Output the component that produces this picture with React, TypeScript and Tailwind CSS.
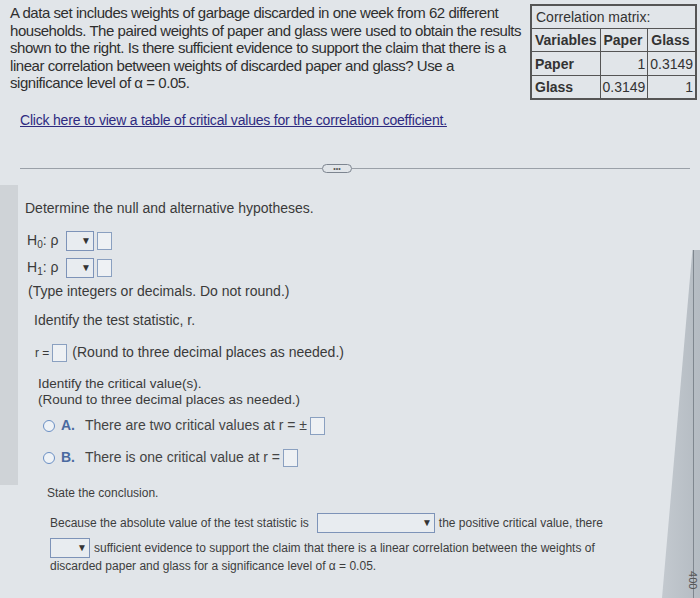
import React from 'react';

const Drop: React.FC<{ w: string }> = ({ w }) => (
  <span className={`inline-flex items-center justify-end border border-[#7d93b8] bg-[#e8ecf0] h-[20px] ${w} align-middle`}>
    <span className="text-[10px] leading-none text-[#333] pr-[2px]">▼</span>
  </span>
);

const Box: React.FC<{ cls?: string }> = ({ cls }) => (
  <span className={`inline-block border border-[#8aa0c0] bg-[#eef1f4] align-middle ${cls ?? 'w-[15px] h-[18px]'}`} />
);

const Radio: React.FC<{ letter: string; text: string }> = ({ letter, text }) => (
  <div className="flex items-center text-[14px] text-[#444]">
    <span className="w-[12px] h-[12px] rounded-full border-[1.5px] border-[#6a8fc4] bg-[#eef2f6] mr-[6px]" />
    <span className="font-bold text-[#4a6aa0] w-[24px]">{letter}</span>
    <span>{text}</span>
    <Box cls="w-[15px] h-[18px] ml-[3px] bg-[#dde6f0]" />
  </div>
);

const App: React.FC = () => {
  return (
    <div
      className="relative w-[700px] h-[598px] overflow-hidden bg-[#e1e5e9] text-[#333]"
      style={{ fontFamily: '"Liberation Sans", Arial, sans-serif' }}
    >
      {/* left bezel */}
      <div className="absolute left-0 top-[185px] h-[300px] w-[18px] bg-[#cfd3d7]" />

      {/* top: question + correlation matrix */}
      <div className="relative flex pl-[10px] pt-[4px]">
        <p className="w-[520px] text-[15px] leading-[17.5px] text-[#2f2f2f] tracking-[-0.45px] whitespace-nowrap">
          A data set includes weights of garbage discarded in one week from 62 different
          <br />
          households. The paired weights of paper and glass were used to obtain the results
          <br />
          shown to the right. Is there sufficient evidence to support the claim that there is a
          <br />
          linear correlation between weights of discarded paper and glass? Use a
          <br />
          significance level of α = 0.05.
        </p>
        <table className="border-collapse border-2 border-[#555] text-[14px] leading-[20px] text-[#333] h-[96px]">
          <tbody>
            <tr>
              <td colSpan={3} className="border border-[#555] px-[4px]">Correlation matrix:</td>
            </tr>
            <tr className="font-bold">
              <td className="border border-[#555] px-[3px]">Variables</td>
              <td className="border border-[#555] px-[3px]">Paper</td>
              <td className="border border-[#555] px-[3px]">Glass</td>
            </tr>
            <tr>
              <td className="border border-[#555] px-[3px] font-bold">Paper</td>
              <td className="border border-[#555] px-[2px] text-right">1</td>
              <td className="border border-[#555] px-[2px] text-right">0.3149</td>
            </tr>
            <tr>
              <td className="border border-[#555] px-[3px] font-bold">Glass</td>
              <td className="border border-[#555] px-[2px] text-right">0.3149</td>
              <td className="border border-[#555] px-[2px] text-right">1</td>
            </tr>
          </tbody>
        </table>
      </div>

      <div className="relative pl-[20px] pt-[8px]">
        <span className="text-[14px] text-[#2e2a80] underline tracking-[-0.2px]">
          Click here to view a table of critical values for the correlation coefficient.
        </span>
      </div>

      {/* separator */}
      <div className="relative flex items-center pl-[20px] pr-[10px] mt-[32px]">
        <div className="h-px bg-[#9aa0a8] w-[302px]" />
        <div className="w-[30px] h-[9px] rounded-full border border-[#7d8590] flex items-center justify-center text-[7px] leading-none text-[#555]">
          •••
        </div>
        <div className="h-px bg-[#9aa0a8] flex-1" />
      </div>

      <div className="relative pl-[25px] pt-[25px] text-[14px] text-[#3a3a3a]">
        <div>Determine the null and alternative hypotheses.</div>

        <div className="mt-[11px] flex flex-col gap-[6px] pl-[2px]">
          <div className="flex items-center gap-[3px]">
            <span className="w-[36px]">H<sub className="text-[10px]">0</sub>: ρ</span>
            <Drop w="w-[28px]" />
            <Box />
          </div>
          <div className="flex items-center gap-[3px]">
            <span className="w-[36px]">H<sub className="text-[10px]">1</sub>: ρ</span>
            <Drop w="w-[28px]" />
            <Box />
          </div>
        </div>
        <div className="pl-[3px] mt-[3px]">(Type integers or decimals. Do not round.)</div>

        <div className="pl-[9px] mt-[8px]">Identify the test statistic, r.</div>

        <div className="pl-[10px] mt-[11px] flex items-center">
          <span className="text-[12px] mr-[3px]">r =</span>
          <Box cls="w-[15px] h-[18px] mr-[5px]" />
          <span>(Round to three decimal places as needed.)</span>
        </div>

        <div className="pl-[13px] mt-[13px] text-[13.5px] leading-[16px]">
          <div>Identify the critical value(s).</div>
          <div>(Round to three decimal places as needed.)</div>
        </div>

        <div className="pl-[18px] mt-[7px] flex flex-col gap-[11px]">
          <Radio letter="A." text="There are two critical values at r = ±" />
          <Radio letter="B." text="There is one critical value at r =" />
        </div>

        <div className="pl-[22px] mt-[16px] text-[12px] text-[#3d3d3d]">State the conclusion.</div>

        <div className="pl-[25px] mt-[11px] w-[620px] text-[12px] leading-[17px] text-[#3d3d3d]">
          <div className="flex items-center">
            <span>Because the absolute value of the test statistic is</span>
            <span className="ml-[8px] mr-[4px]"><Drop w="w-[118px]" /></span>
            <span>the positive critical value, there</span>
          </div>
          <div className="flex items-center mt-[5px]">
            <span className="mr-[4px]"><Drop w="w-[40px]" /></span>
            <span>sufficient evidence to support the claim that there is a linear correlation between the weights of</span>
          </div>
          <div>discarded paper and glass for a significance level of α = 0.05.</div>
        </div>
      </div>

      {/* right side bezel */}
      <div className="absolute right-0 top-[250px] bottom-0 w-[38px] bg-gradient-to-r from-[#c3c9cf] to-[#b4bbc2] [clip-path:polygon(80%_0,100%_0,100%_100%,0_100%)]" />
      <div className="absolute right-[6px] top-[250px] bottom-0 w-px bg-[#7f878f]" />
      <div className="absolute right-[-2px] bottom-[10px] text-[11px] text-[#555] rotate-90">400</div>
    </div>
  );
};

export default App;
